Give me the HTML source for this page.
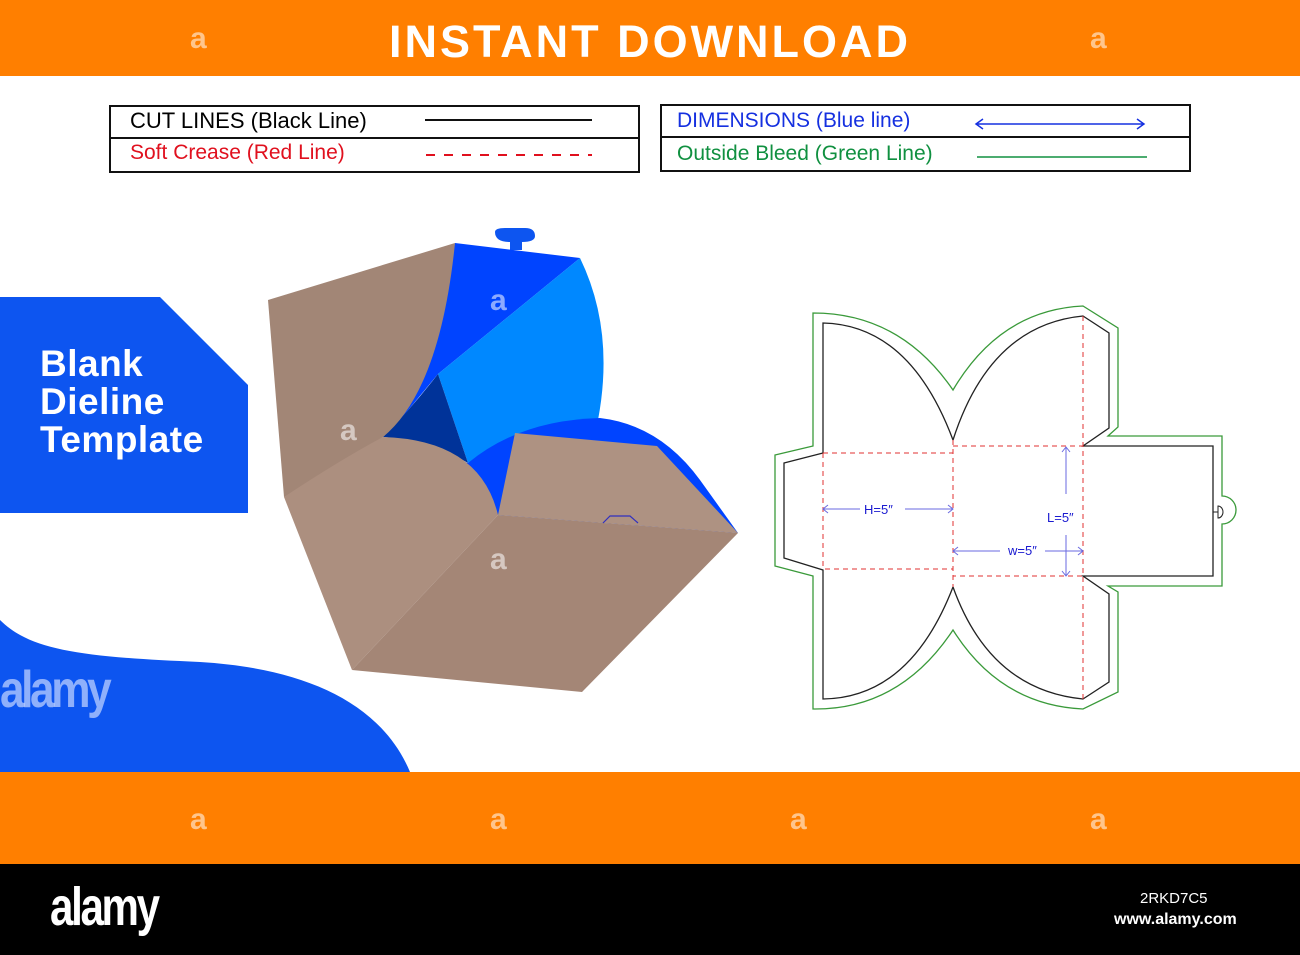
<!DOCTYPE html>
<html><head><meta charset="utf-8"><style>
body{margin:0;width:1300px;height:955px;position:relative;overflow:hidden;background:#fff;font-family:"Liberation Sans",sans-serif}
.abs{position:absolute}
.wm{position:absolute;color:rgba(255,255,255,.55);font-weight:bold;font-size:30px;font-family:"Liberation Sans Narrow","Liberation Sans",sans-serif}
</style></head><body>
<div class="abs" style="left:0;top:0;width:1300px;height:76px;background:#ff7f00"></div>
<div class="abs" style="left:0;top:14px;width:1300px;text-align:center;color:#fff;font-weight:bold;font-size:45px;letter-spacing:3px;line-height:56px">INSTANT DOWNLOAD</div>
<div class="wm" style="left:190px;top:22px">a</div><div class="wm" style="left:1090px;top:22px">a</div>

<div class="abs" style="left:109px;top:105px;width:527px;height:64px;border:2px solid #111"></div>
<div class="abs" style="left:109px;top:137px;width:529px;height:2px;background:#111"></div>
<div class="abs" style="left:130px;top:108px;font-size:22px;color:#000">CUT LINES (Black Line)</div>
<div class="abs" style="left:130px;top:141px;font-size:21px;color:#e0101e">Soft Crease (Red Line)</div>
<div class="abs" style="left:425px;top:119px;width:167px;height:2px;background:#111"></div>

<div class="abs" style="left:660px;top:104px;width:527px;height:64px;border:2px solid #111"></div>
<div class="abs" style="left:660px;top:136px;width:529px;height:2px;background:#111"></div>
<div class="abs" style="left:677px;top:109px;font-size:21px;color:#1530e0">DIMENSIONS (Blue line)</div>
<div class="abs" style="left:677px;top:142px;font-size:21px;color:#109040">Outside Bleed (Green Line)</div>
<svg class="abs" style="left:0;top:0" width="1300" height="955">
<line x1="426" y1="155" x2="592" y2="155" stroke="#e0101e" stroke-width="2" stroke-dasharray="9 9"/>
<path d="M977 124H1143M983 119L976 124L983 129M1137 119L1144 124L1137 129" stroke="#1530e0" stroke-width="1.5" fill="none"/>
<line x1="977" y1="157" x2="1147" y2="157" stroke="#109040" stroke-width="1.5"/>
<path d="M0 297H160L248 385V513H0Z" fill="#0d55f0"/>
<path d="M0 620C30 650 80 657 200 662C300 668 380 700 410 772H0Z" fill="#0d55f0"/>
<path d="M495 232Q495 228 505 228H525Q535 228 535 236Q535 242 522 242V250H510V242Q495 242 495 232Z" fill="#0d55f0"/>
<path d="M383 437L468 463L515 433L498 515Z" fill="#0044ff"/>
<path d="M455 243L580 258L438 374L400 420Q430 330 455 243Z" fill="#0044ff"/>
<path d="M580 258Q615 330 598 420Q540 430 468 463L438 374Z" fill="#0088ff"/>
<path d="M438 374L468 463Q430 440 383 437Q410 410 438 374Z" fill="#003399"/>
<path d="M468 463Q520 420 600 418Q660 425 700 480L738 533L498 515Z" fill="#0044ff"/>
<path d="M268 300L455 243Q440 390 383 437Q340 470 284 497Z" fill="#a28676"/>
<path d="M515 433L657 446L738 533L498 515Z" fill="#ae9282"/>
<path d="M284 497Q340 460 383 437Q480 440 498 515L352 670Z" fill="#ac8f7f"/>
<path d="M498 515L738 533L582 692L352 670Z" fill="#a48676"/>
<path d="M603 523L610 516H630L638 523" stroke="#3030c0" stroke-width="1.2" fill="none"/>
<path d="M813 313Q900 313 953 390Q1000 310 1083 306L1118 328V427L1108 436H1222V496A14 14 0 0 1 1222 524V586H1108L1118 592V692L1083 709Q1000 705 953 630Q900 710 813 709V576L775 566V455L813 446Z" fill="none" stroke="#3a9a3a" stroke-width="1.3"/>
<path d="M823 323Q910 325 953 440Q990 325 1083 316L1109 333V428L1083 446H1213V576H1083L1109 594V682L1083 699Q990 690 953 587Q910 698 823 699V570L784 558V463L823 453Z" fill="none" stroke="#222" stroke-width="1.3"/>
<path d="M1213 512H1218M1218 506A5 6 0 0 1 1218 518Z" stroke="#222" fill="none"/>
<g stroke="#e03030" stroke-width="1" stroke-dasharray="5 4" fill="none">
<path d="M823 453H953V569H823M953 446H1083V576H953M953 440V587M1083 316V699M823 453V570"/>
</g>
<g stroke="#6a6ae0" stroke-width="1" fill="none">
<path d="M823 509H860M905 509H953M828 505L823 509L828 513M948 505L953 509L948 513"/>
<path d="M953 551H1000M1045 551H1083M958 547L953 551L958 555M1078 547L1083 551L1078 555"/>
<path d="M1066 447V494M1066 535V576M1062 452L1066 447L1070 452M1062 571L1066 576L1070 571"/>
</g>
<text x="864" y="514" font-size="13" fill="#1a1ad0" font-family="Liberation Sans">H=5″</text>
<text x="1047" y="522" font-size="13" fill="#1a1ad0" font-family="Liberation Sans">L=5″</text>
<text x="1008" y="555" font-size="13" fill="#1a1ad0" font-family="Liberation Sans">w=5″</text>
</svg>
<div class="abs" style="left:40px;top:345px;color:#fff;font-weight:bold;font-size:37px;line-height:38px;letter-spacing:0.5px">Blank<br>Dieline<br>Template</div>
<div class="wm" style="left:0;top:660px;font-size:52px;color:rgba(200,215,255,.7);letter-spacing:-4px;transform:scaleX(.85);transform-origin:left">alamy</div>
<div class="wm" style="left:340px;top:414px">a</div><div class="wm" style="left:490px;top:284px">a</div><div class="wm" style="left:490px;top:543px">a</div>

<div class="abs" style="left:0;top:772px;width:1300px;height:92px;background:#ff7f00"></div>
<div class="wm" style="left:190px;top:803px">a</div><div class="wm" style="left:490px;top:803px">a</div><div class="wm" style="left:790px;top:803px">a</div><div class="wm" style="left:1090px;top:803px">a</div>
<div class="abs" style="left:0;top:864px;width:1300px;height:91px;background:#000"></div>
<div class="abs" style="left:50px;top:876px;color:#fff;font-weight:bold;font-size:54px;letter-spacing:-3px;transform:scaleX(.78);transform-origin:left">alamy</div>
<div class="abs" style="left:1140px;top:890px;color:#fff;font-size:15px">2RKD7C5</div>
<div class="abs" style="left:1114px;top:911px;color:#fff;font-size:16px;font-weight:bold">www.alamy.com</div>
</body></html>
